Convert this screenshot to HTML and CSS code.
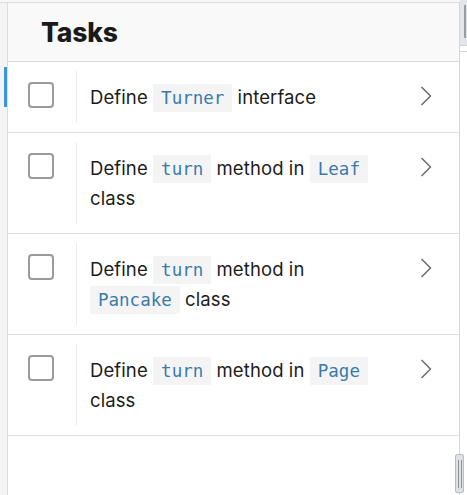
FILE: index.html
```html
<!DOCTYPE html>
<html>
<head>
<meta charset="utf-8">
<link rel="stylesheet" href="styles.css">
</head>
<body>
<div class="frame">
  <div class="gutter"><div class="indicator"></div></div>
  <main class="panel">
    <header class="head"><h1>Tasks</h1></header>
    <ul class="list">
      <li class="row">
        <div class="check"><span class="box"></span></div>
        <div class="divider"></div>
        <div class="body">Define <code>Turner</code> interface</div>
        <div class="chev"><svg width="12" height="20" viewBox="0 0 12 20"><polyline points="1.5,1 10.5,10 1.5,19" fill="none" stroke="#666" stroke-width="1.4"/></svg></div>
      </li>
      <li class="row">
        <div class="check"><span class="box"></span></div>
        <div class="divider"></div>
        <div class="body">Define <code>turn</code> method in <code>Leaf</code> class</div>
        <div class="chev"><svg width="12" height="20" viewBox="0 0 12 20"><polyline points="1.5,1 10.5,10 1.5,19" fill="none" stroke="#666" stroke-width="1.4"/></svg></div>
      </li>
      <li class="row">
        <div class="check"><span class="box"></span></div>
        <div class="divider"></div>
        <div class="body">Define <code>turn</code> method in <code>Pancake</code> class</div>
        <div class="chev"><svg width="12" height="20" viewBox="0 0 12 20"><polyline points="1.5,1 10.5,10 1.5,19" fill="none" stroke="#666" stroke-width="1.4"/></svg></div>
      </li>
      <li class="row">
        <div class="check"><span class="box"></span></div>
        <div class="divider"></div>
        <div class="body">Define <code>turn</code> method in <code>Page</code> class</div>
        <div class="chev"><svg width="12" height="20" viewBox="0 0 12 20"><polyline points="1.5,1 10.5,10 1.5,19" fill="none" stroke="#666" stroke-width="1.4"/></svg></div>
      </li>
    </ul>
    <div class="thumb"><span></span><span></span></div>
  </main>
  <div class="rail">
    <div class="rail-top"><span class="rail-line"></span></div>
    <div class="rail-gap"></div>
  </div>
</div>
</body>
</html>
```

FILE: styles.css
```css
* { box-sizing: border-box; }
html, body { margin: 0; padding: 0; }
body {
  background: #fff;
  font-family: Inter, "Open Sans", sans-serif;
  color: #1c1c1c;
  width: 467px;
  height: 495px;
  overflow: hidden;
}
.frame {
  display: flex;
  height: 495px;
  background: #f7f7f7;
}
.gutter {
  width: 8px;
  margin-top: 2px;
  border-top: 1px solid #dcdcdc;
  border-right: 1px solid #dcdcdc;
  background: #f4f4f4;
}
.indicator {
  margin-top: 64px;
  margin-left: 4px;
  width: 3px;
  height: 40px;
  background: #3b95d6;
}
.panel {
  position: relative;
  flex: 1;
  margin-top: 2px;
  border-top: 1px solid #dcdcdc;
  border-right: 1px solid #d6d6d6;
  background: #fff;
  display: flex;
  flex-direction: column;
}
.head {
  height: 59px;
  background: #f9f9f9;
  border-bottom: 1px solid #d9d9d9;
  padding-left: 33px;
  display: flex;
  align-items: center;
}
.head h1 {
  margin: 0;
  font-size: 26.5px;
  font-weight: 800;
  color: #1a1a1a;
  letter-spacing: -0.2px;
}
.list {
  list-style: none;
  margin: 0;
  padding: 0;
}
.row {
  display: flex;
  border-bottom: 1px solid #dedede;
}
.check {
  width: 68px;
  padding: 20px 0 0 20px;
}
.box {
  display: block;
  width: 26px;
  height: 26px;
  border: 2px solid #9a9a9a;
  border-radius: 4px;
}
.divider {
  width: 1px;
  margin: 9px 0;
  background: #ececec;
}
.body {
  flex: 1;
  padding: 20px 30px 20px 13px;
  font-size: 18.5px;
  line-height: 30px;
  letter-spacing: 0.1px;
}
code {
  font-family: "DejaVu Sans Mono", monospace;
  font-size: 17.5px;
  line-height: 20px;
  letter-spacing: 0;
  color: #3a7aae;
  background: #f4f4f4;
  padding: 4px 8px;
}
.chev {
  width: 12px;
  margin-right: 27px;
  padding-top: 24px;
}
.chev svg { display: block; }
.thumb {
  position: absolute;
  right: -5px;
  bottom: 2px;
  width: 9px;
  height: 39px;
  background: #dde0e4;
  border: 1px solid #b9bcc0;
  border-radius: 2px;
  display: flex;
  justify-content: center;
  align-items: center;
  gap: 2px;
}
.thumb span {
  width: 1px;
  height: 28px;
  background: #8e9196;
}
.rail {
  width: 7px;
  background: #fff;
}
.rail-top {
  height: 46px;
  background: #e2e5e9;
  border-bottom: 1px solid #cfd2d6;
  padding: 5px 0 0 4px;
}
.rail-line {
  display: block;
  width: 2px;
  height: 33px;
  background: #9a9ea3;
}
.rail-gap {
  height: 6px;
  border-bottom: 1px solid #d6d6d6;
}
```
